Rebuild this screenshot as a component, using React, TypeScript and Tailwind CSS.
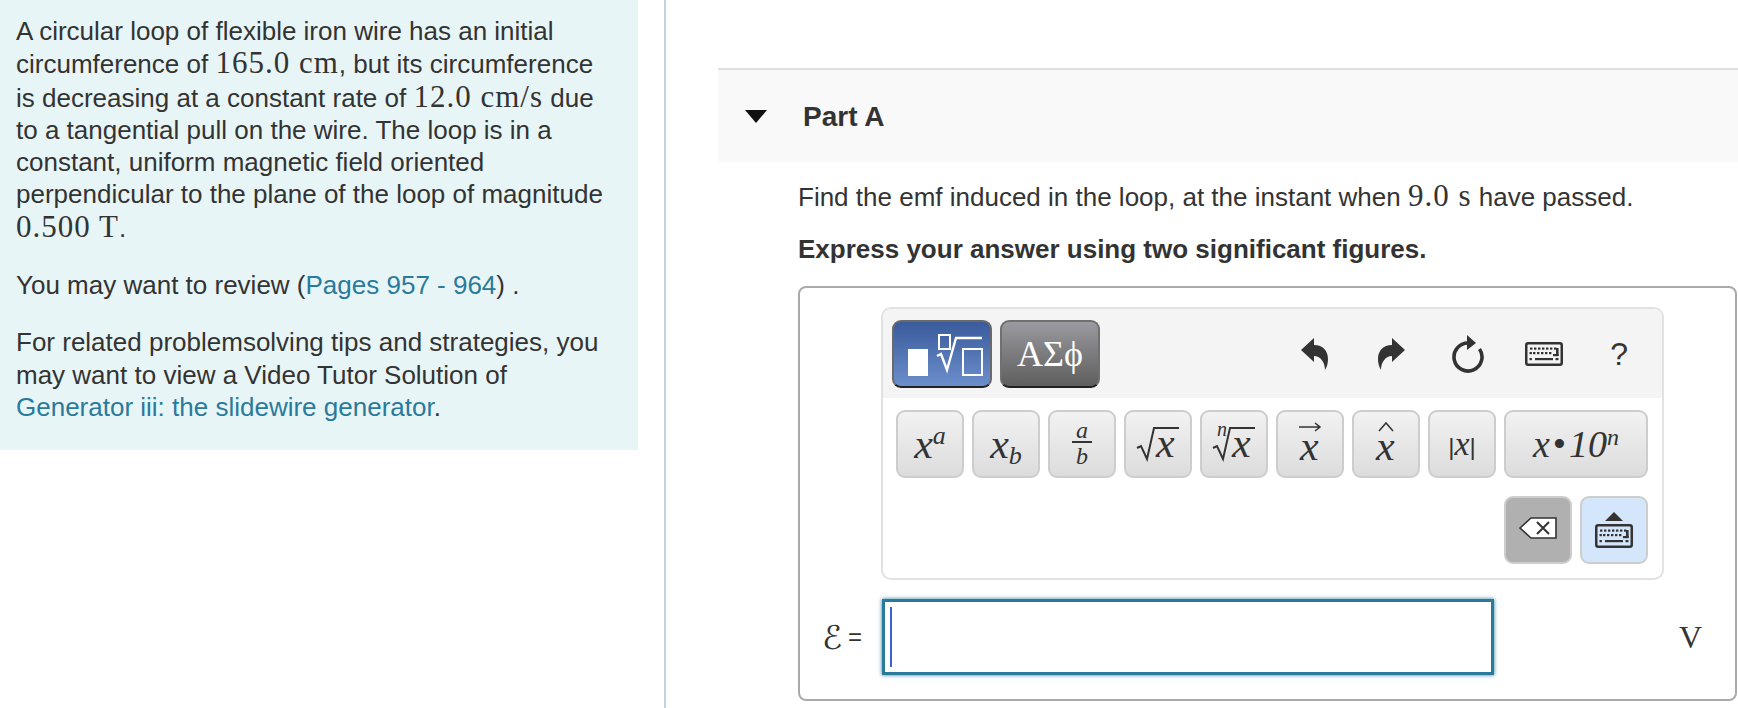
import React from "react";

const M = ({ children }: { children: React.ReactNode }) => (
  <span className="font-['Liberation_Serif',serif] text-[31px] leading-none tracking-[1px]">{children}</span>
);
const A = ({ children }: { children: React.ReactNode }) => (
  <span className="text-[#2a7a9b]">{children}</span>
);
const I = ({ children, c = "" }: { children: React.ReactNode; c?: string }) => (
  <span className={"font-['Liberation_Serif',serif] italic " + c}>{children}</span>
);

const Keyboard = ({ w = 38, h = 24 }: { w?: number; h?: number }) => {
  const dots: React.ReactNode[] = [];
  for (let i = 0; i < 7; i++) dots.push(<rect key={"a" + i} x={5 + i * 4} y={5.5} width={2.4} height={2.2} />);
  for (let i = 0; i < 5; i++) dots.push(<rect key={"b" + i} x={8 + i * 4} y={10} width={2.4} height={2.2} />);
  return (
    <svg width={w} height={h} viewBox="0 0 38 24" fill="#333">
      <rect x="1.25" y="1.25" width="35.5" height="21.5" rx="2" fill="none" stroke="#333" strokeWidth="2.5" />
      {dots}
      <rect x="4.5" y="10" width="2.4" height="2.2" />
      <rect x="31" y="6" width="2.6" height="8" />
      <rect x="28" y="12" width="5.6" height="2.2" />
      <rect x="4.5" y="16" width="2.4" height="2.2" />
      <rect x="10" y="16" width="18" height="2.2" />
      <rect x="30.5" y="16" width="3" height="2.2" />
    </svg>
  );
};

const Reply = ({ flip = false }: { flip?: boolean }) => (
  <svg width="27" height="32" viewBox="0 0 27 32" className={flip ? "-scale-x-100" : ""} fill="#333">
    <path d="M0 12 L13 0 V7 C22 7 27 13 27 21 C27 25 26 29 24 32 C24 25 20 18 13 18 V24 Z" />
  </svg>
);

const Key = ({ children, wide = false }: { children: React.ReactNode; wide?: boolean }) => (
  <div
    className={
      "h-[68px] flex items-center justify-center rounded-[9px] border-2 border-[#cdcdcd] bg-linear-to-b from-[#f2f2f2] to-[#dcdcdc] text-[#333] " +
      (wide ? "w-[144px]" : "w-[68px]")
    }
  >
    {children}
  </div>
);

const Radical = () => (
  <svg width="44" height="36" viewBox="0 0 44 36" fill="none" stroke="#333">
    <path d="M1 22 L5 20 L11 33 L18 2 H43" strokeWidth="2" />
  </svg>
);

export default function App() {
  return (
    <div className="flex w-[1738px] h-[708px] overflow-hidden bg-white font-['Liberation_Sans',Arial,sans-serif] text-[#333]">
      <div className="w-[666px] h-full shrink-0 border-r-2 border-[#c3d2e0]">
        <div className="w-[638px] h-[450px] bg-[#e8f5f7] pl-4 pr-[28px] pt-[15px] text-[26px] leading-[32.3px]">
          <p>
            A circular loop of flexible iron wire has an initial circumference of <M>165.0 cm</M>, but its circumference
            is decreasing at a constant rate of <M>12.0 cm/s</M> due to a tangential pull on the wire. The loop is in a
            constant, uniform magnetic field oriented perpendicular to the plane of the loop of magnitude <M>0.500 T</M>.
          </p>
          <p className="mt-[25px]">
            You may want to review (<A>Pages 957 - 964</A>) .
          </p>
          <p className="mt-[25px]">
            For related problemsolving tips and strategies, you may want to view a Video Tutor Solution of{" "}
            <A>Generator iii: the slidewire generator</A>.
          </p>
        </div>
      </div>

      <div className="flex-1 pl-[52px] pt-[68px]">
        <div className="h-[94px] flex items-center bg-[#f9f9f9] border-t-2 border-[#e0e0e0]">
          <svg width="22" height="13" viewBox="0 0 22 13" className="ml-[27px] mr-[36px]" fill="#111">
            <path d="M0 0H22L11 13Z" />
          </svg>
          <span className="font-bold text-[28px] mt-[2px]">Part A</span>
        </div>
        <div className="pl-[80px]">
          <p className="mt-[18px] text-[26px] leading-[32px]">
            Find the emf induced in the loop, at the instant when <M>9.0 s</M> have passed.
          </p>
          <p className="mt-[20px] text-[26px] leading-[32px] font-bold">Express your answer using two significant figures.</p>

          <div className="mt-[21px] h-[415px] w-[939px] rounded-[8px] border-2 border-[#aaaaaa] pt-[19px] pl-[81px]">
            <div className="w-[783px] h-[273px] rounded-[10px] border-2 border-[#e2e2e2] overflow-hidden">
              <div className="h-[89px] bg-[#f4f4f4] flex items-center pl-[9px]">
                <div className="w-[100px] h-[68px] rounded-[9px] border-2 border-[#6a6a6a] border-b-[#222] bg-linear-to-b from-[#3a5b9c] to-[#6c8fcc] flex items-center pl-[14px]">
                  <svg width="76" height="44" viewBox="0 0 76 44" fill="none" stroke="white" strokeWidth="2">
                    <rect x="0" y="17" width="20" height="27" fill="white" stroke="none" />
                    <rect x="31" y="3" width="11" height="14" />
                    <path d="M29 24 L33 22 L39 38 L48 6 H74" strokeWidth="2.4" />
                    <rect x="55" y="17" width="19" height="26" />
                  </svg>
                </div>
                <div className="ml-2 w-[100px] h-[68px] rounded-[9px] border-2 border-[#707070] border-b-[#222] bg-linear-to-b from-[#9a9aa0] to-[#5f5f5f] flex items-center justify-center text-white font-['Liberation_Serif',serif] text-[36px]">
                  ΑΣϕ
                </div>
                <div className="ml-auto flex items-center">
                  <Reply />
                  <span className="w-[50px]" />
                  <Reply flip />
                  <span className="w-[46px]" />
                  <svg width="34" height="38" viewBox="0 0 34 38">
                    <path d="M28.5 14 A14 14 0 1 1 17 8" fill="none" stroke="#333" strokeWidth="3.6" />
                    <path d="M16 0 L25 8 L16 15 Z" fill="#333" />
                  </svg>
                  <span className="w-[40px]" />
                  <Keyboard />
                  <span className="w-[47px]" />
                  <span className="text-[32px] mr-[34px]">?</span>
                </div>
              </div>
              <div className="flex gap-2 pl-[13px] pt-[12px]">
                <Key>
                  <I c="text-[42px] leading-none">
                    x<sup className="text-[26px] top-[-14px] leading-none">a</sup>
                  </I>
                </Key>
                <Key>
                  <I c="text-[42px] leading-none">
                    x<sub className="text-[26px] bottom-[-6px] leading-none">b</sub>
                  </I>
                </Key>
                <Key>
                  <div className="flex flex-col items-center w-5">
                    <I c="text-[24px] leading-[22px]">a</I>
                    <div className="w-5 h-[2px] bg-[#333]" />
                    <I c="text-[24px] leading-[26px]">b</I>
                  </div>
                </Key>
                <Key>
                  <div className="relative flex items-end">
                    <Radical />
                    <I c="absolute left-[20px] top-[-1px] text-[42px] leading-[36px]">x</I>
                  </div>
                </Key>
                <Key>
                  <div className="relative flex items-end">
                    <Radical />
                    <I c="absolute left-[20px] top-[-1px] text-[42px] leading-[36px]">x</I>
                    <I c="absolute left-[5px] top-[-7px] text-[20px] leading-[20px]">n</I>
                  </div>
                </Key>
                <Key>
                  <div className="relative w-[24px] h-[40px]">
                    <svg width="24" height="12" viewBox="0 0 24 12" className="absolute left-0 top-[-3px]" fill="none" stroke="#333" strokeWidth="1.5">
                      <path d="M1 6H22M17 2L22 6L17 10" />
                    </svg>
                    <I c="absolute left-[2px] top-[4px] text-[42px] leading-[36px]">x</I>
                  </div>
                </Key>
                <Key>
                  <div className="relative w-[24px] h-[40px]">
                    <svg width="18" height="11" viewBox="0 0 18 11" className="absolute left-[3px] top-[-3px]" fill="none" stroke="#333" strokeWidth="1.5">
                      <path d="M2 10L9 2L16 10" />
                    </svg>
                    <I c="absolute left-[2px] top-[4px] text-[42px] leading-[36px]">x</I>
                  </div>
                </Key>
                <Key>
                  <span className="text-[24px] leading-none">
                    |<I c="text-[34px] leading-none">x</I>|
                  </span>
                </Key>
                <Key wide>
                  <I c="text-[38px] leading-none">
                    x<span className="not-italic mx-[3px]">•</span>10
                    <sup className="text-[24px] top-[-12px] leading-none">n</sup>
                  </I>
                </Key>
              </div>
              <div className="flex justify-end gap-2 pr-[14px] pt-[18px]">
                <div className="w-[68px] h-[68px] rounded-[9px] border-2 border-[#cdcdcd] bg-[#b0b0b0] flex items-center justify-center pb-1">
                  <svg width="38" height="22" viewBox="0 0 38 22" fill="white" stroke="#333" strokeWidth="1.6">
                    <path d="M1 11 L12 1 H37 V21 H12 Z" />
                    <path d="M18 5 L30 17 M30 5 L18 17" fill="none" strokeWidth="2" />
                  </svg>
                </div>
                <div className="w-[68px] h-[68px] rounded-[9px] border-2 border-[#cdcdcd] bg-[#d3e6fc] flex flex-col items-center justify-center gap-[3px]">
                  <svg width="18" height="9" viewBox="0 0 18 9" fill="#333">
                    <path d="M9 0L18 9H0Z" />
                  </svg>
                  <Keyboard />
                </div>
              </div>
            </div>

            <div className="flex items-center mt-[19px]">
              <span className="ml-[-59px] w-[60px] flex items-center text-[24px]">
                <span className="font-['DejaVu_Sans',sans-serif] text-[33px] leading-none">ℰ</span>
                <span className="ml-[6px]">=</span>
              </span>
              <div className="w-[612px] h-[76px] border-[3px] border-[#2a7a9b] shadow-[0_0_4px_#2a7a9b] bg-white pl-[5px] py-[5px]">
                <div className="w-[2px] h-[60px] bg-[#3a63d2]" />
              </div>
              <span className="ml-[185px] font-['Liberation_Serif',serif] text-[32px]">V</span>
            </div>
          </div>
        </div>
      </div>
    </div>
  );
}
